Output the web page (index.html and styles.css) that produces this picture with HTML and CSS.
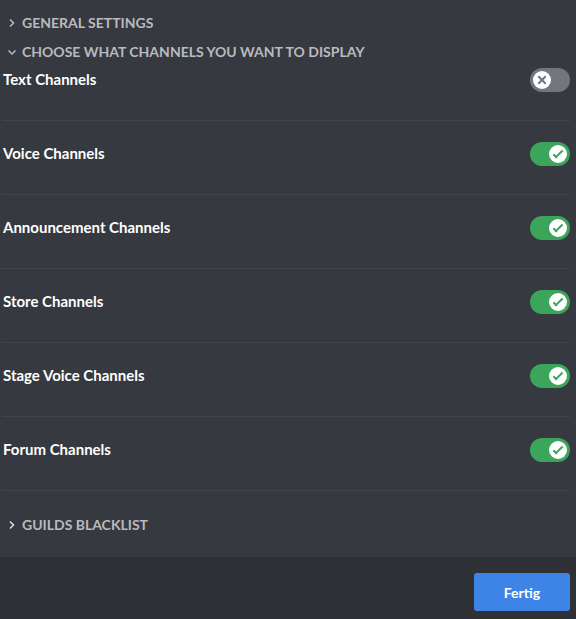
FILE: index.html
```html
<!DOCTYPE html>
<html lang="en">
<head>
<meta charset="utf-8">
<title>Channel settings</title>
<link rel="stylesheet" href="styles.css">
</head>
<body>
<main class="content">
  <div class="section-header">
    <span class="chevron"><svg width="10" height="10" viewBox="0 0 10 10"><polyline points="3,1.5 6.5,5 3,8.5" fill="none" stroke="currentColor" stroke-width="1.5"/></svg></span>
    <span class="section-title">General Settings</span>
  </div>
  <div class="section-header">
    <span class="chevron"><svg width="10" height="10" viewBox="0 0 10 10"><polyline points="1.5,3.5 5,7 8.5,3.5" fill="none" stroke="currentColor" stroke-width="1.5"/></svg></span>
    <span class="section-title">Choose what channels you want to display</span>
  </div>

  <div class="row">
    <span class="row-label">Text Channels</span>
    <span class="toggle off"><svg class="knob" width="18" height="18" viewBox="0 0 20 20"><circle cx="10" cy="10" r="10" fill="#fff"/><path fill="#72767d" d="M5.13231 6.72963L6.7233 5.13864L14.855 13.2704L13.264 14.8614L5.13231 6.72963Z"/><path fill="#72767d" d="M13.2704 5.13864L14.8614 6.72963L6.72963 14.8614L5.13864 13.2704L13.2704 5.13864Z"/></svg></span>
  </div>
  <div class="row">
    <span class="row-label">Voice Channels</span>
    <span class="toggle on"><svg class="knob" width="18" height="18" viewBox="0 0 20 20"><circle cx="10" cy="10" r="10" fill="#fff"/><path fill="#3ba55c" d="M7.89561 14.8538L6.30462 13.2629L14.3099 5.25755L15.9009 6.84854L7.89561 14.8538Z"/><path fill="#3ba55c" d="M4.08643 11.0903L5.67742 9.49929L9.4485 13.2704L7.85751 14.8614L4.08643 11.0903Z"/></svg></span>
  </div>
  <div class="row">
    <span class="row-label">Announcement Channels</span>
    <span class="toggle on"><svg class="knob" width="18" height="18" viewBox="0 0 20 20"><circle cx="10" cy="10" r="10" fill="#fff"/><path fill="#3ba55c" d="M7.89561 14.8538L6.30462 13.2629L14.3099 5.25755L15.9009 6.84854L7.89561 14.8538Z"/><path fill="#3ba55c" d="M4.08643 11.0903L5.67742 9.49929L9.4485 13.2704L7.85751 14.8614L4.08643 11.0903Z"/></svg></span>
  </div>
  <div class="row">
    <span class="row-label">Store Channels</span>
    <span class="toggle on"><svg class="knob" width="18" height="18" viewBox="0 0 20 20"><circle cx="10" cy="10" r="10" fill="#fff"/><path fill="#3ba55c" d="M7.89561 14.8538L6.30462 13.2629L14.3099 5.25755L15.9009 6.84854L7.89561 14.8538Z"/><path fill="#3ba55c" d="M4.08643 11.0903L5.67742 9.49929L9.4485 13.2704L7.85751 14.8614L4.08643 11.0903Z"/></svg></span>
  </div>
  <div class="row">
    <span class="row-label">Stage Voice Channels</span>
    <span class="toggle on"><svg class="knob" width="18" height="18" viewBox="0 0 20 20"><circle cx="10" cy="10" r="10" fill="#fff"/><path fill="#3ba55c" d="M7.89561 14.8538L6.30462 13.2629L14.3099 5.25755L15.9009 6.84854L7.89561 14.8538Z"/><path fill="#3ba55c" d="M4.08643 11.0903L5.67742 9.49929L9.4485 13.2704L7.85751 14.8614L4.08643 11.0903Z"/></svg></span>
  </div>
  <div class="row">
    <span class="row-label">Forum Channels</span>
    <span class="toggle on"><svg class="knob" width="18" height="18" viewBox="0 0 20 20"><circle cx="10" cy="10" r="10" fill="#fff"/><path fill="#3ba55c" d="M7.89561 14.8538L6.30462 13.2629L14.3099 5.25755L15.9009 6.84854L7.89561 14.8538Z"/><path fill="#3ba55c" d="M4.08643 11.0903L5.67742 9.49929L9.4485 13.2704L7.85751 14.8614L4.08643 11.0903Z"/></svg></span>
  </div>

  <div class="section-header last">
    <span class="chevron bright"><svg width="10" height="10" viewBox="0 0 10 10"><polyline points="3,1.5 6.5,5 3,8.5" fill="none" stroke="currentColor" stroke-width="1.5"/></svg></span>
    <span class="section-title">Guilds Blacklist</span>
  </div>
</main>
<footer class="footer">
  <button class="done-button" type="button">Fertig</button>
</footer>
</body>
</html>
```

FILE: styles.css
```css
html, body {
  margin: 0;
  padding: 0;
  overflow: hidden;
}

body {
  background: #36393f;
  font-family: Lato, "Noto Sans", sans-serif;
  color: #fff;
}

.content {
  padding: 8px 6px 18px 2px;
}

.section-header {
  display: flex;
  align-items: center;
  gap: 4px;
  height: 29px;
  padding-left: 4px;
  color: #b9bbbe;
}

.section-header.last {
  margin-top: -2px;
}

.chevron {
  display: flex;
  align-items: center;
  justify-content: center;
  width: 12px;
  height: 12px;
  color: #b9bbbe;
}

.chevron.bright {
  color: #dcddde;
}

.section-title {
  font-size: 14px;
  font-weight: 700;
  text-transform: uppercase;
}

.row {
  display: flex;
  align-items: center;
  justify-content: space-between;
  height: 24px;
  padding-bottom: 28px;
  border-bottom: 1px solid #42454b;
  margin-top: 2px;
  margin-bottom: 18px;
}

.row + .row {
  margin-top: 0;
  margin-bottom: 21px;
}

.row:nth-of-type(3) {
  margin-bottom: 21px;
}

.row-label {
  font-size: 15px;
  font-weight: 700;
  color: #fff;
  padding-left: 1px;
  padding-bottom: 3px;
}

.toggle {
  display: flex;
  align-items: center;
  width: 40px;
  height: 24px;
  box-sizing: border-box;
  padding: 0 3px;
  border-radius: 12px;
}

.toggle.off {
  background: #72767d;
  justify-content: flex-start;
}

.toggle.on {
  background: #3ba55c;
  justify-content: flex-end;
}

.knob {
  display: block;
}

.footer {
  background: #2f3136;
  display: flex;
  justify-content: flex-end;
  padding: 16px 6px 8px;
}

.done-button {
  width: 96px;
  height: 38px;
  border: none;
  border-radius: 3px;
  background: #3e84e6;
  color: #fff;
  font-family: Lato, "Noto Sans", sans-serif;
  font-size: 14px;
  font-weight: 700;
}
```
